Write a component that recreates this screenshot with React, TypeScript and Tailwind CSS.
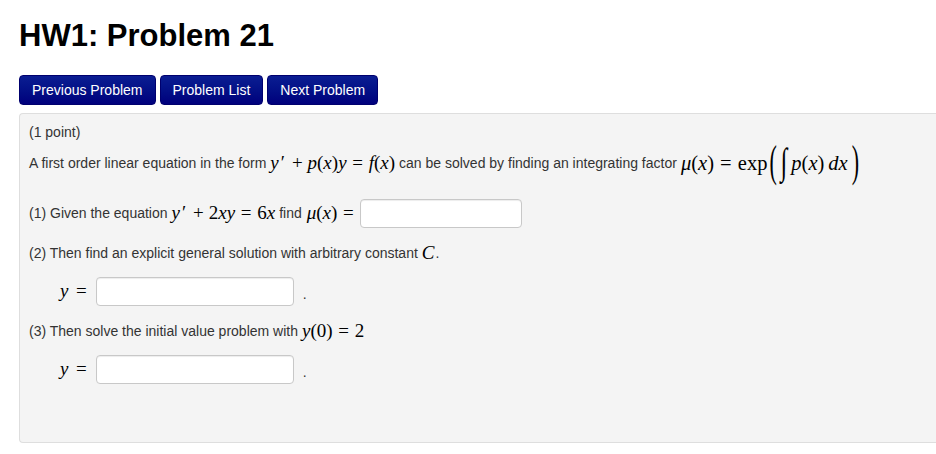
import React from "react";

const serif = "font-['Liberation_Serif','Times_New_Roman',serif]";

const I = ({ children }: { children: React.ReactNode }) => <span className="italic">{children}</span>;
const Op = ({ children }: { children: React.ReactNode }) => <span className="mx-[0.26em]">{children}</span>;
const Rel = ({ children }: { children: React.ReactNode }) => <span className="mx-[0.3em]">{children}</span>;
const Prime = () => <span className="ml-[2px] mr-[2px]">′</span>;

const M = ({ children, className = "" }: { children: React.ReactNode; className?: string }) => (
  <span className={`${serif} text-[19px] text-black whitespace-nowrap mx-[4px] ${className}`}>{children}</span>
);

const BigParen = ({ ch, className = "" }: { ch: string; className?: string }) => (
  <span className={`inline-block text-[22px] leading-none scale-y-[2.05] -mt-[3px] ${className}`}>{ch}</span>
);

const AnswerBox = ({ width }: { width: string }) => (
  <input
    type="text"
    className={`${width} h-[29px] bg-white border border-[#c8c8c8] rounded-[4px] shadow-[inset_0_1px_1px_rgba(0,0,0,0.075)] outline-none`}
  />
);

const NavButton = ({ label }: { label: string }) => (
  <button className="h-[30px] px-3 rounded-[4px] border border-[#00006e] bg-gradient-to-b from-[#0b1d92] to-[#00007c] text-white text-[14px] leading-none">
    {label}
  </button>
);

export default function App() {
  return (
    <div className="w-[936px] h-[454px] overflow-hidden bg-white font-['Liberation_Sans',Arial,sans-serif] text-[#333]">
      <div className="pl-[19px] pt-[19px]">
        <h1 className="text-[31px] font-bold leading-[34px] text-black">HW1: Problem 21</h1>

        <div className="flex gap-[4px] mt-[22px]">
          <NavButton label="Previous Problem" />
          <NavButton label="Problem List" />
          <NavButton label="Next Problem" />
        </div>

        <div className="mt-[8px] h-[330px] bg-[#f4f4f4] border border-r-0 border-[#dedede] rounded-l-[4px] pl-[9px] pt-[8px] text-[14px]">
          <div className="h-[20px] leading-[20px]">(1 point)</div>

          <div className="h-[42px] flex items-center whitespace-nowrap">
            <span className="shrink-0">A first order linear equation in the form</span>
            <M className="shrink-0 text-[19.5px]">
              <I>y</I>
              <Prime />
              <Op>+</Op>
              <I>p</I>(<I>x</I>)<I>y</I>
              <Rel>=</Rel>
              <I>f</I>(<I>x</I>)
            </M>
            <span className="shrink-0">can be solved by finding an integrating factor</span>
            <M className="shrink-0 flex items-center text-[20.5px]">
              <I>μ</I>(<I>x</I>)<Rel>=</Rel>exp
              <BigParen ch="(" className="ml-[2px]" />
              <span className="inline-block text-[24px] italic leading-none ml-[4px] mr-[4px] scale-y-[1.55] -mt-[2px]">∫</span>
              <I>p</I>(<I>x</I>)<span className="ml-[4px]"><I>dx</I></span>
              <BigParen ch=")" className="ml-[4px]" />
            </M>
          </div>

          <div className="mt-[14px] h-[30px] flex items-center">
            <span>(1) Given the equation</span>
            <M>
              <I>y</I>
              <Prime />
              <Op>+</Op>2<I>xy</I>
              <Rel>=</Rel>6<I>x</I>
            </M>
            <span>find</span>
            <M className="ml-[5px] mr-[6px]">
              <I>μ</I>(<I>x</I>)<span className="ml-[0.3em]">=</span>
            </M>
            <AnswerBox width="w-[162px]" />
          </div>

          <div className="mt-[15px] h-[20px] flex items-center">
            <span>(2) Then find an explicit general solution with arbitrary constant</span>
            <M className="mr-[1px]">
              <I>C</I>
            </M>
            <span>.</span>
          </div>

          <div className="mt-[13px] h-[30px] flex items-center pl-[31px]">
            <M className="ml-0 mr-[9px]">
              <I>y</I><span className="ml-[0.4em]">=</span>
            </M>
            <AnswerBox width="w-[198px]" />
            <span className="ml-[9px] mt-[6px]">.</span>
          </div>

          <div className="mt-[15px] h-[20px] flex items-center">
            <span>(3) Then solve the initial value problem with</span>
            <M>
              <I>y</I>(0)<Rel>=</Rel>2
            </M>
          </div>

          <div className="mt-[13px] h-[30px] flex items-center pl-[31px]">
            <M className="ml-0 mr-[9px]">
              <I>y</I><span className="ml-[0.4em]">=</span>
            </M>
            <AnswerBox width="w-[198px]" />
            <span className="ml-[9px] mt-[6px]">.</span>
          </div>
        </div>
      </div>
    </div>
  );
}
